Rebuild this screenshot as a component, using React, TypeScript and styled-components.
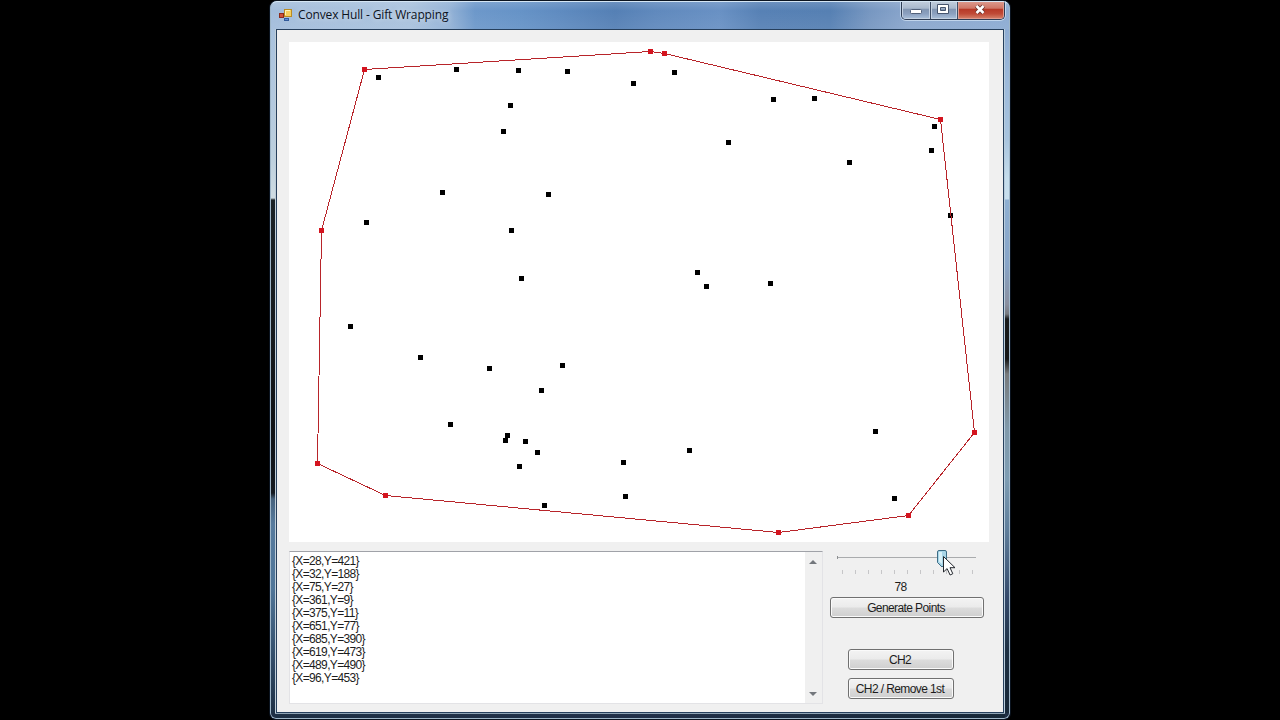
import React from "react";
import styled, { createGlobalStyle } from "styled-components";

const GlobalStyle = createGlobalStyle`
  * { box-sizing: border-box; }
  body { margin: 0; background: #000; overflow: hidden; }
`;

const Desktop = styled.div`
  height: 720px;
  padding: 1px 270px;
  background: #000;
`;

const Window = styled.div`
  position: relative;
  display: grid;
  grid-template-columns: 6px 728px 6px;
  grid-template-rows: 28px 684px 6px;
  width: 740px;
  height: 718px;
  overflow: hidden;
  border-radius: 7px 7px 6px 6px;
  background: #1f2f45;
  box-shadow: 0 0 0 1px #0b1420;
  &::after {
    content: "";
    position: absolute;
    inset: 0;
    border: 1px solid #9fb6c8;
    border-top-color: #d5e6f4;
    border-radius: 7px 7px 6px 6px;
    pointer-events: none;
  }
`;

const TitleBar = styled.header`
  grid-column: 1 / -1;
  display: flex;
  align-items: flex-start;
  padding-left: 9px;
  background:
    linear-gradient(180deg, rgba(255,255,255,.14), transparent 35%, rgba(255,255,255,.06)),
    linear-gradient(90deg, #a3bddb 0, #a9c2dd 140px, #93b2d6 180px, #6d98ca 205px, #6693c7 250px, #5f8bc0 290px, #5580b5 345px, #6089bd 385px, #6991c4 450px, #5781b5 490px, #5680b3 560px, #7797c1 600px, #8ba7cd 640px, #8dacd3 100%);
`;

const AppIcon = styled.svg`
  display: block;
  margin-top: 7px;
  flex: none;
`;

const Title = styled.h1`
  margin: 6px auto 0 6px;
  font: 400 12px/16px "Open Sans", sans-serif;
  letter-spacing: -0.14px;
  color: #0b121c;
  white-space: nowrap;
  text-shadow: 0 0 6px rgba(255,255,255,.7);
`;

const CaptionGroup = styled.div`
  display: flex;
  width: 104px;
  height: 19px;
  margin-right: 5px;
  border: 1px solid #2e3d54;
  border-top: 0;
  border-radius: 0 0 5px 5px;
  overflow: hidden;
  box-shadow: 0 0 0 1px rgba(220,235,250,.65);
`;

const CaptionButton = styled.button<{ $w: number; $close?: boolean }>`
  display: flex;
  justify-content: center;
  align-items: center;
  width: ${p => p.$w}px;
  padding: 0;
  border: 1px solid ${p => (p.$close ? "#e09a8d" : "#c4d1e2")};
  border-top: 0;
  background: ${p => p.$close
    ? "linear-gradient(#dd9d91 0, #cf7767 42%, #b83a28 50%, #c04a37 75%, #d27a63)"
    : "linear-gradient(#c3cfde 0, #a9b9cd 42%, #8296b3 50%, #8ba0bf 75%, #a5bbd6)"};
  & + & { box-shadow: -1px 0 0 #3d4d66; margin-left: 1px; }
`;

const Side = styled.div<{ $right?: boolean }>`
  border-${p => (p.$right ? "left" : "right")}: 1px solid ${p => (p.$right ? "#b9cddd" : "#c0ced9")};
  background: ${p => p.$right
    ? "linear-gradient(#8fadd3 0, #9cb9da 50px, #a8c4de 110px, #c5ddec 150px, #c8dfee 170px, #8fb0d2 171px, #88a5c8 235px, #8a90a0 275px, #777a80 285px, #181a1b 290px, #151617 330px, #777a7c 345px, #819aab 400px, #7e9db3 450px, #607f9c 500px, #33496a 570px, #1d3044 620px, #172838 684px)"
    : "linear-gradient(#a9c2dd 0, #b3c9df 70px, #bdd0de 130px, #cfdce3 169px, #1b2226 171px, #171b1f 300px, #0f1216 400px, #14191f 464px, #46627d 470px, #577b9e 495px, #4f7598 560px, #36526f 620px, #1e3045 684px)"};
`;

const BottomEdge = styled.div`
  grid-column: 1 / -1;
  border-top: 1px solid #8ea3b4;
  margin: 0 5px;
  background: linear-gradient(90deg, #1e3045, #213049 50%, #172838);
`;

const Client = styled.main`
  display: flex;
  flex-direction: column;
  gap: 9px;
  padding: 12px 0 0 12px;
  border: 1px solid #263f5c;
  background: #f0f0f0;
  font: 12px/13px "Liberation Sans", Arial, sans-serif;
  letter-spacing: -0.65px;
  color: #1c1c1c;
`;

const Canvas = styled.svg`
  display: block;
  flex: none;
  background: #fff;
`;

const LowerRow = styled.div`
  display: flex;
  align-items: flex-start;
`;

const ListBox = styled.div`
  display: flex;
  width: 534px;
  height: 153px;
  border: 1px solid #e3e3e6;
  border-top-color: #a0a2a8;
  background: #fff;
`;

const Lines = styled.div`
  flex: 1;
  padding: 3px 0 0 2px;
`;

const Line = styled.div`
  height: 13px;
  white-space: nowrap;
`;

const ScrollBar = styled.div`
  display: flex;
  flex-direction: column;
  justify-content: space-between;
  align-items: center;
  width: 17px;
  padding: 8px 1px 7px 0;
  background: #f0f0f0;
`;

const Arrow = styled.i<{ $down?: boolean }>`
  border: 4px solid transparent;
  border-${p => (p.$down ? "top" : "bottom")}: 4px solid #73777c;
  border-${p => (p.$down ? "bottom" : "top")}-width: 0;
`;

const Controls = styled.div`
  display: flex;
  flex-direction: column;
  align-items: center;
  width: 154px;
  margin-left: 7px;
`;

const Slider = styled.svg`
  display: block;
  overflow: visible;
`;

const Value = styled.div`
  margin: 2px 13px 3px 0;
`;

const PushButton = styled.button<{ $w: number; $top?: number; $shift?: number }>`
  width: ${p => p.$w}px;
  height: 21px;
  margin: ${p => p.$top ?? 0}px ${p => p.$shift ?? 0}px 0 0;
  padding: 1px 2px 0 0;
  border: 1px solid #707070;
  border-radius: 3px;
  background: linear-gradient(#f3f3f3, #ebebeb 48%, #dcdcdc 52%, #cfcfcf);
  box-shadow: inset 0 0 0 1px #fafafa;
  font: inherit;
  line-height: 14px;
  letter-spacing: -0.6px;
  color: inherit;
  white-space: nowrap;
`;

const hull: [number, number][] = [
  [28, 421], [32, 188], [75, 27], [361, 9], [375, 11],
  [651, 77], [685, 390], [619, 473], [489, 490], [96, 453],
];

const inner: [number, number][] = [
  [89, 35], [167, 27], [229, 28], [278, 29], [344, 41], [385, 30], [221, 63], [214, 89],
  [484, 57], [525, 56], [645, 84], [642, 108], [439, 100], [560, 120], [153, 150], [259, 152],
  [77, 180], [222, 188], [661, 173], [232, 236], [408, 230], [417, 244], [481, 241], [61, 284],
  [131, 315], [200, 326], [273, 323], [252, 348], [161, 382], [218, 393], [216, 398], [236, 399],
  [248, 410], [230, 424], [334, 420], [400, 408], [586, 389], [336, 454], [255, 463], [605, 456],
];

const Points = ({ items, color }: { items: [number, number][]; color: string }) => (
  <>
    {items.map(([x, y]) => (
      <rect key={`${x}-${y}`} x={x - 2} y={y - 2} width={5} height={5} fill={color} />
    ))}
  </>
);

export default function App() {
  return (
    <Desktop>
      <GlobalStyle />
      <Window>
        <TitleBar>
          <AppIcon width="13" height="13" viewBox="0 0 13 13">
            <rect x="5.5" y="1.5" width="7" height="7" fill="#f4cf5d" stroke="#b98b23" />
            <path d="M6.5 7V2.5H11" fill="none" stroke="#fff3b8" />
            <rect x=".5" y="5.5" width="4" height="4" fill="#cf5238" stroke="#8c2a1c" />
            <rect x="5.5" y="10.5" width="4" height="2" fill="#5d8edc" stroke="#315a9a" />
          </AppIcon>
          <Title>Convex Hull - Gift Wrapping</Title>
          <CaptionGroup>
            <CaptionButton $w={28} aria-label="Minimize">
              <svg width="14" height="12" viewBox="0 0 14 12">
                <rect x="1.5" y="5.5" width="11" height="4" rx="1" fill="#fff" stroke="#52617a" />
              </svg>
            </CaptionButton>
            <CaptionButton $w={26} aria-label="Maximize">
              <svg width="14" height="14" viewBox="0 0 14 14">
                <path d="M.5 1.5h11v9H.5zM3.500 4.500v3h5v-3z" fill="#fff" fillRule="evenodd" stroke="#46556f" />
              </svg>
            </CaptionButton>
            <CaptionButton $w={46} $close aria-label="Close">
              <svg width="14" height="14" viewBox="0 0 14 14">
                <path d="M2.500 3l7 7M9.500 3l-7 7" stroke="#6b3731" strokeWidth="4.400" />
                <path d="M2.500 3l7 7M9.500 3l-7 7" stroke="#fff" strokeWidth="2.500" />
              </svg>
            </CaptionButton>
          </CaptionGroup>
        </TitleBar>
        <Side />
        <Client>
          <Canvas width="700" height="500" viewBox="0 0 700 500" shapeRendering="crispEdges">
            <Points items={inner} color="#000" />
            <polygon
              points={hull.map(([x, y]) => `${x + 0.5},${y + 0.5}`).join(" ")}
              fill="none"
              stroke="#b8242a"
            />
            <Points items={hull} color="#d4141f" />
          </Canvas>
          <LowerRow>
            <ListBox>
              <Lines>
                {hull.map(([x, y]) => (
                  <Line key={x}>{`{X=${x},Y=${y}}`}</Line>
                ))}
              </Lines>
              <ScrollBar>
                <Arrow />
                <Arrow $down />
              </ScrollBar>
            </ListBox>
            <Controls>
              <Slider width="154" height="28" viewBox="0 0 154 28">
                <path d="M7 6.500h139" stroke="#a9abad" />
                <path d="M7.500 5v3" stroke="#8f9193" />
                {Array.from({ length: 11 }, (_, i) => (
                  <path key={i} d={`M${12.5 + i * 13} 19v4`} stroke="#c6c6c8" />
                ))}
                <path d="M107.500 1q0-1.500 1.500-1.500h6q1.500 0 1.500 1.500v10.500l-4.500 4.500-4.500-4.500z" fill="#a9d6e8" stroke="#3d6d86" />
                <path d="M109 1h3v12l-3-2.500z" fill="#d9f1f8" />
                <path
                  d="M113.500 5.500v15.500l3.600-3.400 3 6.400 2.700-1.300-2.800-6h5z"
                  fill="#fff"
                  stroke="#22262c"
                />
              </Slider>
              <Value>78</Value>
              <PushButton $w={154}>Generate Points</PushButton>
              <PushButton $w={106} $top={31} $shift={12}>CH2</PushButton>
              <PushButton $w={106} $top={8} $shift={12}>CH2 / Remove 1st</PushButton>
            </Controls>
          </LowerRow>
        </Client>
        <Side $right />
        <BottomEdge />
      </Window>
    </Desktop>
  );
}
